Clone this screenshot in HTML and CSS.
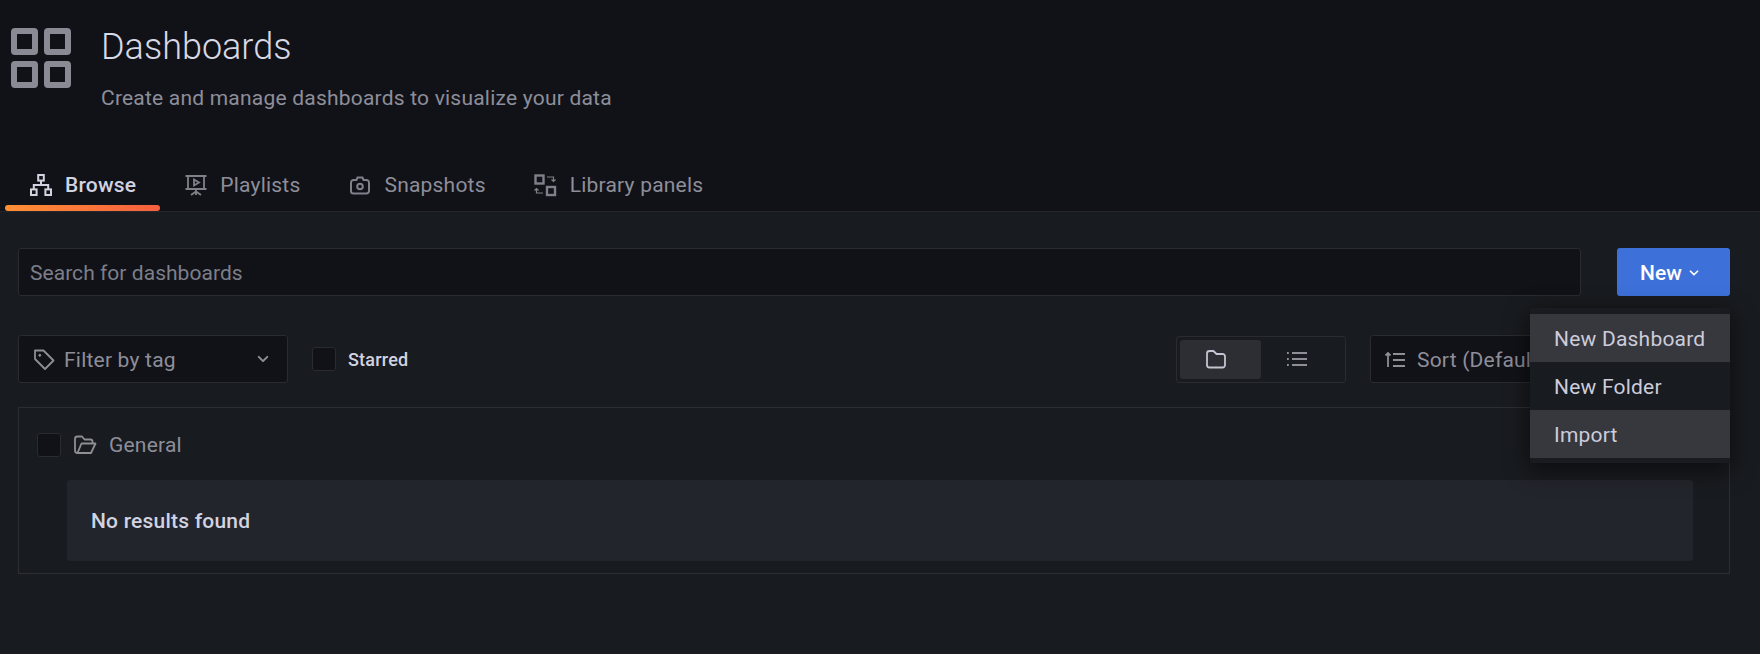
FILE: index.html
```html
<!DOCTYPE html>
<html>
<head>
  <title>Dashboards</title>
  <link rel="stylesheet" href="styles.css">
</head>
<body>

  <header class="page-header">
    <div class="title-row">
      <svg class="title-icon" viewBox="0 0 60 60" fill="none" stroke="#8a8a94" stroke-width="6">
        <rect x="3" y="3" width="21" height="21" rx="1"/>
        <rect x="36" y="3" width="21" height="21" rx="1"/>
        <rect x="3" y="36" width="21" height="21" rx="1"/>
        <rect x="36" y="36" width="21" height="21" rx="1"/>
      </svg>
      <div class="title-text">
        <h1>Dashboards</h1>
        <p>Create and manage dashboards to visualize your data</p>
      </div>
    </div>

    <nav class="tabs">
      <a class="tab active">
        <svg class="icon" viewBox="0 0 24 24" fill="none" stroke="currentColor" stroke-width="2">
          <rect x="9.2" y="2" width="5.6" height="5.6"/>
          <rect x="2" y="16.4" width="5.6" height="5.6"/>
          <rect x="16.4" y="16.4" width="5.6" height="5.6"/>
          <path d="M12 7.6V12M4.8 16.4V12H19.2V16.4"/>
        </svg>
        Browse
      </a>
      <a class="tab">
        <svg class="icon tab-icon" viewBox="0 0 24 24" fill="none" stroke="currentColor" stroke-width="1.8">
          <path d="M1.5 3H22.5M4 3V16H20V3M1.5 16H22.5M12 16V22M12 18.5L7 22M12 18.5L17 22"/>
          <path d="M10 6.5L15 9.5L10 12.5Z"/>
        </svg>
        Playlists
      </a>
      <a class="tab">
        <svg class="icon tab-icon" viewBox="0 0 24 24" fill="none" stroke="currentColor" stroke-width="2">
          <path d="M8.5 7L9.5 4.5H14.5L15.5 7H18.5A2.5 2.5 0 0 1 21 9.5V18A2.5 2.5 0 0 1 18.5 20.5H5.5A2.5 2.5 0 0 1 3 18V9.5A2.5 2.5 0 0 1 5.5 7Z"/>
          <circle cx="12" cy="13.5" r="2.8"/>
        </svg>
        Snapshots
      </a>
      <a class="tab">
        <svg class="icon tab-icon library-icon" viewBox="0 0 24 24" fill="none" stroke="currentColor">
          <rect x="2.5" y="2.5" width="8" height="8" stroke-width="2.4"/>
          <rect x="14" y="14" width="8" height="8" stroke-width="2.4"/>
          <path d="M14 4H20.5V8.5M18.5 6.5L20.5 8.5L22.5 6.5M10 20H3.5V15.5M1.5 17.5L3.5 15.5L5.5 17.5" stroke-width="1.2"/>
        </svg>
        Library panels
      </a>
    </nav>
  </header>

  <main class="page-body">
    <div class="search-row">
      <input class="search-input" type="text" placeholder="Search for dashboards">
      <div class="new-wrap">
        <button class="new-btn">
          New
          <svg class="chevron-small" viewBox="0 0 24 24" fill="#fff"><path d="M17,9.17a1,1,0,0,0-1.41,0L12,12.71,8.46,9.17a1,1,0,0,0-1.41,0,1,1,0,0,0,0,1.42l4.24,4.24a1,1,0,0,0,1.42,0L17,10.59A1,1,0,0,0,17,9.17Z"/></svg>
        </button>
        <ul class="new-menu">
          <li class="hover">New Dashboard</li>
          <li>New Folder</li>
          <li class="hover">Import</li>
        </ul>
      </div>
    </div>

    <div class="filter-row">
      <div class="select tag-select">
        <svg class="icon" viewBox="0 0 24 24" fill="none" stroke="#8e8e96" stroke-width="1.8" stroke-linejoin="round">
          <path d="M3 3.5H11.5L21.5 13.5L13 22L3 12Z"/>
          <circle cx="7.8" cy="8.3" r="1" fill="#8e8e96" stroke-width="1"/>
        </svg>
        <span>Filter by tag</span>
        <svg class="chevron" viewBox="0 0 24 24" fill="#8e8e96"><path d="M17,9.17a1,1,0,0,0-1.41,0L12,12.71,8.46,9.17a1,1,0,0,0-1.41,0,1,1,0,0,0,0,1.42l4.24,4.24a1,1,0,0,0,1.42,0L17,10.59A1,1,0,0,0,17,9.17Z"/></svg>
      </div>
      <label class="starred"><span class="checkbox"></span>Starred</label>
      <div class="spacer"></div>
      <div class="view-toggle">
        <span class="view-btn active">
          <svg class="icon" viewBox="0 0 24 24" fill="none" stroke="#c4c5d2" stroke-width="1.8" stroke-linejoin="round">
            <path d="M3 6.5A2.5 2.5 0 0 1 5.5 4H9.5L12.5 7H18.5A2.5 2.5 0 0 1 21 9.5V18A2.5 2.5 0 0 1 18.5 20.5H5.5A2.5 2.5 0 0 1 3 18Z"/>
          </svg>
        </span>
        <span class="view-btn">
          <svg class="icon" viewBox="0 0 24 24" fill="none" stroke="#8e8e96" stroke-width="1.8">
            <path d="M7 6H22M7 12H22M7 18H22M2 6H3.8M2 12H3.8M2 18H3.8"/>
          </svg>
        </span>
      </div>
      <div class="select sort-select">
        <svg class="icon" viewBox="0 0 24 24" fill="none" stroke="#8e8e96" stroke-width="1.8">
          <path d="M5 19V5M2.5 7.5L5 5L7.5 7.5M10 6H22M10 12H22M10 18H22"/>
        </svg>
        <span>Sort (Default A-Z)</span>
      </div>
    </div>

    <section class="results">
      <div class="folder-row">
        <span class="checkbox"></span>
        <svg class="icon" viewBox="0 0 24 24" fill="none" stroke="#8e8e96" stroke-width="1.8" stroke-linejoin="round">
          <path d="M4.5 20A2.5 2.5 0 0 1 2 17.5V6A2.5 2.5 0 0 1 4.5 3.5H9L11.5 6.5H17.5A2 2 0 0 1 19.5 8.5V10.5"/>
          <path d="M4.5 20H18L22.5 10.5H8.5Z"/>
        </svg>
        <span class="folder-name">General</span>
      </div>
      <div class="no-results">No results found</div>
    </section>
  </main>

</body>
</html>
```

FILE: styles.css
```css
* {
  box-sizing: border-box;
}

html, body {
  height: 100%;
}

body {
  margin: 0;
  background-color: #181b1f;
  color: #ccccdc;
  font-family: Roboto, "Liberation Sans", sans-serif;
  font-size: 21px;
  letter-spacing: 0.01em;
  overflow: hidden;
}

.icon {
  width: 24px;
  height: 24px;
  flex-shrink: 0;
}

/* header */
.page-header {
  height: 212px;
  background-color: #111217;
  border-bottom: 1px solid #25272c;
  display: flex;
  flex-direction: column;
  justify-content: space-between;
  padding-top: 28px;
}

.title-row {
  display: flex;
  padding-left: 11px;
}

.title-icon {
  width: 60px;
  height: 60px;
}

.title-text {
  margin-left: 30px;
}

.title-text h1 {
  margin: 1px 0 0;
  font-size: 36px;
  font-weight: 300;
  line-height: 36px;
  letter-spacing: 0;
  color: #d8d9e6;
}

.title-text p {
  margin: 15px 0 0;
  line-height: 36px;
  color: #8e8e9a;
}

.tabs {
  display: flex;
  padding-left: 5px;
}

.tab {
  position: relative;
  display: flex;
  align-items: center;
  gap: 12px;
  height: 52px;
  padding: 0 24px;
  color: #8e8e9a;
  cursor: pointer;
}

.tab-icon {
  color: #80808a;
}

.library-icon {
  margin-left: -1px;
  margin-right: 1px;
}

.tab.active {
  color: #d2d3e1;
  font-weight: 500;
}

.tab.active::after {
  content: "";
  position: absolute;
  left: 0;
  right: 0;
  bottom: 0;
  height: 6px;
  border-radius: 3px;
  background: linear-gradient(90deg, #ff8f35, #f55f3e);
}

/* body */
.page-body {
  padding: 36px 30px 0 18px;
}

.search-row {
  display: flex;
  gap: 36px;
}

.search-input {
  flex: 1;
  height: 48px;
  padding: 2px 11px 0;
  background-color: #111217;
  border: 1px solid #292b30;
  border-radius: 3px;
  color: #ccccdc;
  font: inherit;
  letter-spacing: 0.002em;
  outline: none;
}

.search-input::placeholder {
  color: #7c7f8a;
}

.new-wrap {
  position: relative;
}

.new-btn {
  display: flex;
  align-items: center;
  gap: 2px;
  width: 113px;
  height: 48px;
  padding: 2px 0 0 23px;
  background-color: #3d71d9;
  border: 0;
  border-radius: 3px;
  color: #fff;
  font: inherit;
  font-weight: 500;
}

.chevron-small {
  width: 20px;
  height: 20px;
}

.new-menu {
  position: absolute;
  top: 60px;
  right: 0;
  z-index: 2;
  width: 200px;
  margin: 0;
  padding: 6px 0 5px;
  list-style: none;
  background-color: #181b1f;
  box-shadow: 0 6px 24px rgba(0, 0, 0, 0.6);
  border-radius: 3px 0 0 3px;
}

.new-menu li {
  height: 48px;
  padding: 0 24px;
  line-height: 50px;
  color: #ccccdc;
}

.new-menu li.hover {
  background-color: #37383d;
}

.filter-row {
  display: flex;
  align-items: center;
  margin-top: 39px;
}

.select {
  display: flex;
  align-items: center;
  height: 48px;
  padding-top: 2px;
  background-color: #111217;
  border: 1px solid #292b30;
  border-radius: 3px;
  color: #8e8e9a;
}

.tag-select {
  width: 270px;
  padding: 0 12px 0 13px;
  gap: 8px;
}

.tag-select span {
  padding-top: 2px;
}

.chevron {
  width: 24px;
  height: 24px;
  margin-left: auto;
}

.checkbox {
  display: block;
  flex-shrink: 0;
  width: 24px;
  height: 24px;
  background-color: #111217;
  border: 1px solid #292b30;
  border-radius: 3px;
}

.starred {
  display: flex;
  align-items: center;
  gap: 12px;
  margin-left: 24px;
  font-size: 18px;
  font-weight: 500;
  color: #d2d3e1;
}

.spacer {
  flex: 1;
}

.view-toggle {
  display: flex;
  width: 170px;
  height: 47px;
  padding: 3px;
  border: 1px solid #292b30;
  border-radius: 3px;
}

.view-btn {
  flex: 1;
  display: flex;
  align-items: center;
  justify-content: center;
  padding-right: 10px;
  border-radius: 3px;
}

.view-btn.active {
  background-color: #2c2e33;
}

.sort-select {
  width: 360px;
  margin-left: 24px;
  padding: 2px 13px 0 12px;
  gap: 10px;
}

.results {
  height: 167px;
  margin-top: 24px;
  padding: 25px 36px 0 18px;
  border: 1px solid #2c2e33;
}

.folder-row {
  display: flex;
  align-items: center;
  height: 24px;
}

.folder-row .icon {
  margin-left: 12px;
}

.folder-name {
  margin-left: 12px;
  color: #8e8e9a;
}

.no-results {
  height: 81px;
  margin: 23px 0 0 30px;
  padding-left: 24px;
  background-color: #22252b;
  border-radius: 3px;
  font-weight: 500;
  line-height: 83px;
  color: #d2d3e1;
}
```
